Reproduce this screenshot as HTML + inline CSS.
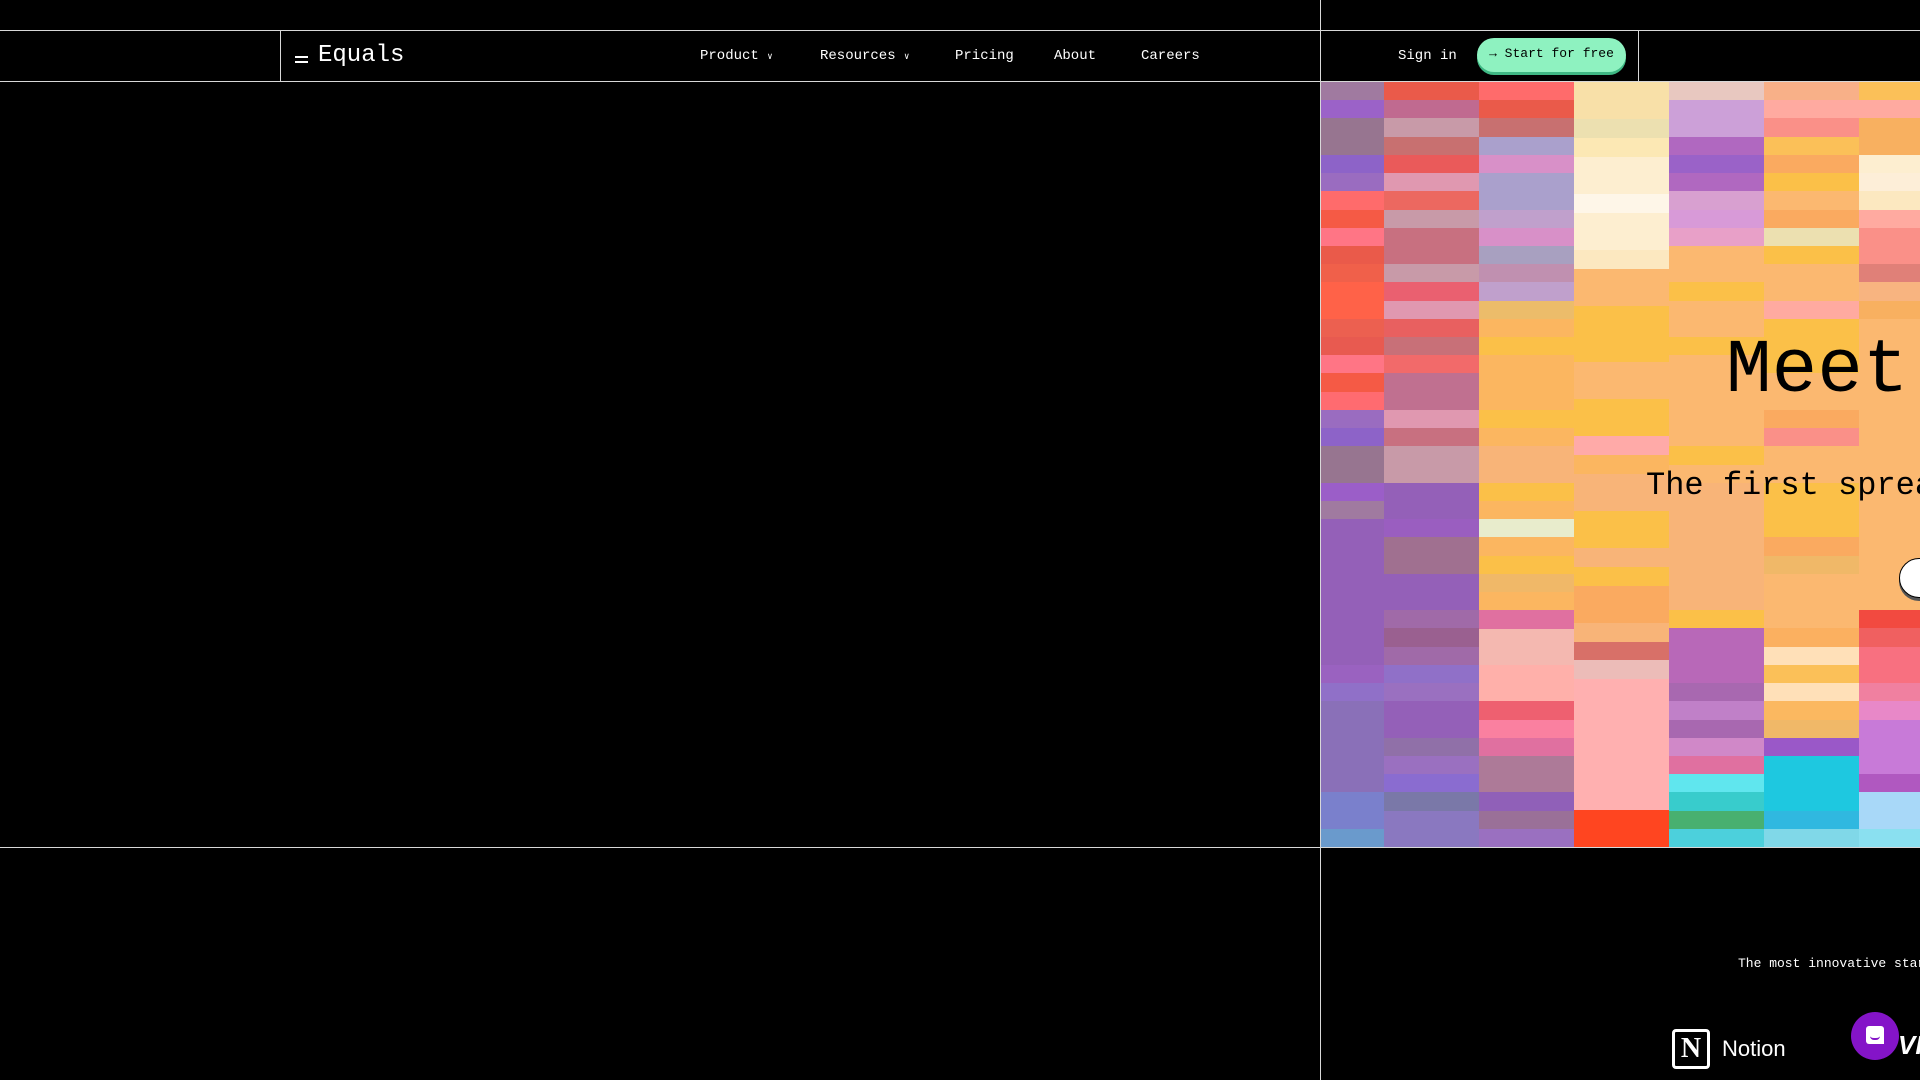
<!DOCTYPE html>
<html><head><meta charset="utf-8"><style>
*{margin:0;padding:0;box-sizing:border-box}
html,body{width:1920px;height:1080px;overflow:hidden}
body{background:#000;position:relative;font-family:"Liberation Mono",monospace;color:#fff}
#w{position:absolute;left:0;top:0;width:1920px;height:1080px;overflow:hidden}
.l{position:absolute;background:#d8d8d8}
.grid{position:absolute;left:1321px;top:82px;width:599px;height:765px;display:flex}
.col{display:flex;flex-direction:column;height:100%}
.col div{flex:1}
.nav{position:absolute;top:56px;transform:translateY(-50%);font-size:14px;color:#fff;white-space:nowrap}
</style></head><body><div id="w">
<div class="l" style="left:0;top:30px;width:1920px;height:1px"></div>
<div class="l" style="left:0;top:81px;width:1920px;height:1px"></div>
<div class="l" style="left:0;top:847px;width:1920px;height:1px"></div>
<div class="l" style="left:280px;top:30px;width:1px;height:52px"></div>
<div class="l" style="left:1320px;top:0;width:1px;height:1080px"></div>
<div class="l" style="left:1638px;top:30px;width:1px;height:52px"></div>

<div style="position:absolute;left:295px;top:56px;width:13px;height:2px;background:#fff"></div>
<div style="position:absolute;left:295px;top:61px;width:13px;height:2px;background:#fff"></div>
<div style="position:absolute;left:318px;top:43px;font-size:24px;line-height:26px">Equals</div>

<div class="nav" style="left:700px">Product <span style="font-size:9px">&#8744;</span></div>
<div class="nav" style="left:820px">Resources <span style="font-size:9px">&#8744;</span></div>
<div class="nav" style="left:955px">Pricing</div>
<div class="nav" style="left:1054px">About</div>
<div class="nav" style="left:1141px">Careers</div>
<div class="nav" style="left:1398px">Sign in</div>
<div style="position:absolute;left:1477px;top:38px;width:149px;height:34px;border-radius:17px;background:#8ef2c0;box-shadow:0 3px 0 #3fb884;color:#000;font-size:13px;line-height:32px;text-align:center">&#8594; Start for free</div>

<div class="grid">
<div class="col" style="width:63px">
<div style="background:#a07aa0"></div><div style="background:#9b62c8"></div><div style="background:#977590;flex:2"></div><div style="background:#8d63c8"></div><div style="background:#9a6cc0"></div><div style="background:#ff6b6b"></div><div style="background:#f55a45"></div><div style="background:#ff7585"></div><div style="background:#ea5a4a"></div><div style="background:#f0604a"></div><div style="background:#ff6248;flex:2"></div><div style="background:#ec6050"></div><div style="background:#e85a50"></div><div style="background:#ff7585"></div><div style="background:#f55a45"></div><div style="background:#ff6b70"></div><div style="background:#9a6cc0"></div><div style="background:#8d63c8"></div><div style="background:#977590;flex:2"></div><div style="background:#9b5ec8"></div><div style="background:#a07aa0"></div><div style="background:#9460b8;flex:8"></div><div style="background:#9a62c0"></div><div style="background:#9070c8"></div><div style="background:#8a70b8;flex:5"></div><div style="background:#7a80cc;flex:2"></div><div style="background:#6a9acc"></div>
</div>
<div class="col" style="width:95px">
<div style="background:#ea5a4a"></div><div style="background:#c06a90"></div><div style="background:#c89aa8"></div><div style="background:#c87070"></div><div style="background:#ea5a5a"></div><div style="background:#e098b0"></div><div style="background:#ec6860"></div><div style="background:#c89aa8"></div><div style="background:#c87080;flex:2"></div><div style="background:#c89aa8"></div><div style="background:#ea6070"></div><div style="background:#e098b0"></div><div style="background:#e86060"></div><div style="background:#c87078"></div><div style="background:#f26a6a"></div><div style="background:#c07090;flex:2"></div><div style="background:#e098b0"></div><div style="background:#c87080"></div><div style="background:#c89aa8;flex:2"></div><div style="background:#9460b8;flex:2"></div><div style="background:#9a5ec0"></div><div style="background:#a07090;flex:2"></div><div style="background:#9460b8;flex:2"></div><div style="background:#a06aa8"></div><div style="background:#9a6090"></div><div style="background:#a06aa8"></div><div style="background:#9070c8"></div><div style="background:#9a70c0"></div><div style="background:#9460b8;flex:2"></div><div style="background:#9070a8"></div><div style="background:#9a70c0"></div><div style="background:#8a6cd0"></div><div style="background:#7a78a8"></div><div style="background:#8a78c0;flex:2"></div>
</div>
<div class="col" style="width:95px">
<div style="background:#ff6b6b"></div><div style="background:#ea5a4a"></div><div style="background:#c87070"></div><div style="background:#aaa0cc"></div><div style="background:#d890c8"></div><div style="background:#aaa0cc;flex:2"></div><div style="background:#c0a0cc"></div><div style="background:#d890c8"></div><div style="background:#a8a0c0"></div><div style="background:#c090b0"></div><div style="background:#c0a0cc"></div><div style="background:#ecbc6a"></div><div style="background:#fbb660"></div><div style="background:#fbc048"></div><div style="background:#fbb660;flex:3"></div><div style="background:#fbc048"></div><div style="background:#fbb660"></div><div style="background:#f8b478;flex:2"></div><div style="background:#fbc048"></div><div style="background:#fbb660"></div><div style="background:#e8eccc"></div><div style="background:#fbb660"></div><div style="background:#fbc048"></div><div style="background:#f0b868"></div><div style="background:#fbb660"></div><div style="background:#e070a0"></div><div style="background:#f4b8b0;flex:2"></div><div style="background:#ffb0aa;flex:2"></div><div style="background:#ee6070"></div><div style="background:#fa80a0"></div><div style="background:#e070a0"></div><div style="background:#ad7a98;flex:2"></div><div style="background:#9060b8"></div><div style="background:#9a7098"></div><div style="background:#9a70c0"></div>
</div>
<div class="col" style="width:95px">
<div style="background:#f8e0a8;flex:2"></div><div style="background:#ece0b0"></div><div style="background:#fce8b4"></div><div style="background:#fdeed0;flex:2"></div><div style="background:#fef6e8"></div><div style="background:#fdeed0;flex:2"></div><div style="background:#fce8c0"></div><div style="background:#fbb870;flex:2"></div><div style="background:#fbc048;flex:3"></div><div style="background:#fbb870;flex:2"></div><div style="background:#fbc048;flex:2"></div><div style="background:#ffaaa8"></div><div style="background:#fbb660"></div><div style="background:#f8b478;flex:2"></div><div style="background:#fbc048;flex:2"></div><div style="background:#f8b478"></div><div style="background:#fbc048"></div><div style="background:#faaa60;flex:2"></div><div style="background:#f8b478"></div><div style="background:#d87068"></div><div style="background:#ecbcb8"></div><div style="background:#ffb0b0;flex:7"></div><div style="background:#ff4520;flex:2"></div>
</div>
<div class="col" style="width:95px">
<div style="background:#e8c8c0"></div><div style="background:#cca0d8;flex:2"></div><div style="background:#b068c0"></div><div style="background:#9a62c8"></div><div style="background:#b068c0"></div><div style="background:#d8a0d0"></div><div style="background:#d89ad8"></div><div style="background:#e8a0c8"></div><div style="background:#fbb870;flex:2"></div><div style="background:#fbc048"></div><div style="background:#fbb870;flex:2"></div><div style="background:#fbc048"></div><div style="background:#fbb870;flex:5"></div><div style="background:#fbc048"></div><div style="background:#fbb870"></div><div style="background:#f8b478;flex:7"></div><div style="background:#fbc048"></div><div style="background:#b868b8;flex:3"></div><div style="background:#a868b0"></div><div style="background:#c080c8"></div><div style="background:#a868b0"></div><div style="background:#d088c8"></div><div style="background:#e070a0"></div><div style="background:#60e6ee"></div><div style="background:#38cccc"></div><div style="background:#48b070"></div><div style="background:#4cd0dc"></div>
</div>
<div class="col" style="width:95px">
<div style="background:#f8b088"></div><div style="background:#ffaaa0"></div><div style="background:#fa9088"></div><div style="background:#fbc058"></div><div style="background:#faaa60"></div><div style="background:#fbc048"></div><div style="background:#fbb870"></div><div style="background:#faaa60"></div><div style="background:#ece0b0"></div><div style="background:#fbc048"></div><div style="background:#fbb870;flex:2"></div><div style="background:#ffaaa0"></div><div style="background:#fbc048;flex:3"></div><div style="background:#fbb870;flex:2"></div><div style="background:#faaa60"></div><div style="background:#fa9088"></div><div style="background:#fbb870;flex:2"></div><div style="background:#fbc048;flex:3"></div><div style="background:#faaa60"></div><div style="background:#f0b868"></div><div style="background:#fbb870;flex:3"></div><div style="background:#fbb060"></div><div style="background:#ffe0b8"></div><div style="background:#fbc058"></div><div style="background:#ffe0b8"></div><div style="background:#fbb860"></div><div style="background:#f0b868"></div><div style="background:#9a58c8"></div><div style="background:#1ec8e0;flex:3"></div><div style="background:#30b8e0"></div><div style="background:#80d8e8"></div>
</div>
<div class="col" style="width:61px">
<div style="background:#fbc058"></div><div style="background:#ffaaa0"></div><div style="background:#f8b060;flex:2"></div><div style="background:#fdeed0"></div><div style="background:#fdeed8"></div><div style="background:#fce8c0"></div><div style="background:#ffaaa0"></div><div style="background:#fa9088;flex:2"></div><div style="background:#e08078"></div><div style="background:#f8b480"></div><div style="background:#f8b060"></div><div style="background:#fbb870;flex:16"></div><div style="background:#f24a40"></div><div style="background:#f06060"></div><div style="background:#f87080;flex:2"></div><div style="background:#f080a0"></div><div style="background:#e888c8"></div><div style="background:#c87ad8;flex:3"></div><div style="background:#b058c0"></div><div style="background:#a8d8f8;flex:2"></div><div style="background:#8ae0f0"></div>
</div>
</div>

<div style="position:absolute;left:1726px;top:326px;width:194px;overflow:hidden;font-size:76px;line-height:90px;color:#000;white-space:nowrap">Meet Equals</div>
<div style="position:absolute;left:1646px;top:466px;width:274px;overflow:hidden;font-size:32px;line-height:40px;color:#000;white-space:nowrap">The first spreadsheet</div>
<div style="position:absolute;left:1899px;top:558px;width:21px;height:44px;overflow:hidden"><div style="width:120px;height:40px;border-radius:20px;background:#fff;border:1.5px solid #000;box-shadow:0 3px 0 #555"></div></div>

<div style="position:absolute;left:1738px;top:956px;width:182px;overflow:hidden;font-size:13px;white-space:nowrap">The most innovative startups</div>
<div style="position:absolute;left:1672px;top:1029px;width:38px;height:40px;border:3px solid #fff;border-radius:4px;background:#000;font-family:'Liberation Serif',serif;font-weight:bold;font-size:28px;line-height:34px;text-align:center;color:#fff">N</div>
<div style="position:absolute;left:1722px;top:1036px;font-family:'Liberation Sans',sans-serif;font-size:22px;color:#fff">Notion</div>
<div style="position:absolute;left:1898px;top:1030px;width:22px;overflow:hidden;font-family:'Liberation Sans',sans-serif;font-size:26px;font-weight:bold;font-style:italic;color:#fff">VI</div>
<div style="position:absolute;left:1851px;top:1012px;width:48px;height:48px;border-radius:50%;background:#8414c8">
<div style="position:absolute;left:15px;top:14px;width:18px;height:18px;background:#fff;border-radius:3px 3px 0 3px"></div>
<div style="position:absolute;left:19px;top:24px;width:10px;height:4px;border-bottom:2px solid #8414c8;border-radius:0 0 6px 6px"></div>
</div>
</div></body></html>
